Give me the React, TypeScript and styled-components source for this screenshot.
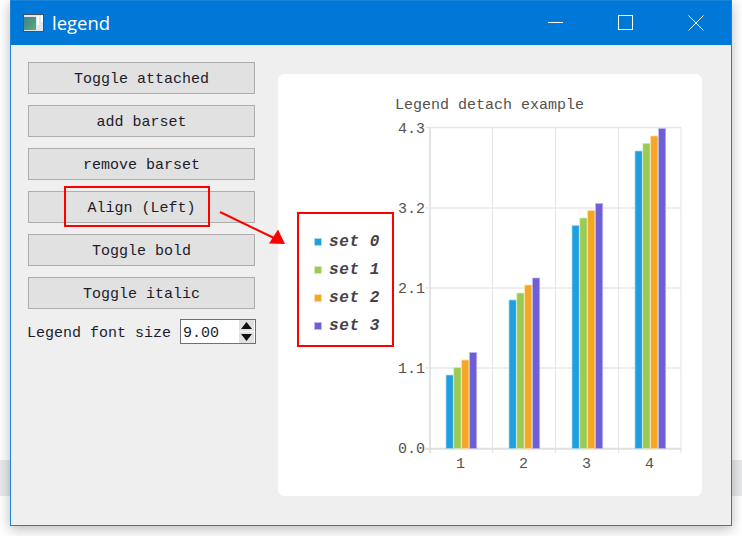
import React from "react";
import styled, { createGlobalStyle } from "styled-components";

const MONO = '"Liberation Mono", "DejaVu Sans Mono", monospace';

const SERIES = [
  { name: "set 0", fill: "#209fdf", edge: "#a6d9f2" },
  { name: "set 1", fill: "#99ca53", edge: "#d6eabb" },
  { name: "set 2", fill: "#f6a625", edge: "#fbdca8" },
  { name: "set 3", fill: "#6f5fd6", edge: "#c0b9ee" },
];

const BAR_TOPS = [
  [375, 367.5, 360, 352.5],
  [300, 293, 285, 278],
  [225.5, 218, 210.5, 203.5],
  [151, 143.5, 136, 128.5],
];

const GlobalStyle = createGlobalStyle`
  html, body {
    margin: 0;
    padding: 0;
    height: 536px;
    overflow: hidden;
    background: #ffffff;
  }
`;

const Page = styled.div`
  position: relative;
  width: 742px;
  height: 536px;
  padding-left: 10px;
  box-sizing: border-box;
  background: linear-gradient(
    to bottom,
    #ffffff 460px,
    #e8e9eb 460px,
    #e8e9eb 496px,
    #ffffff 496px
  );
`;

const Window = styled.div`
  width: 722px;
  height: 526px;
  box-sizing: border-box;
  border: 1px solid #1a83d9;
  background: #efefef;
  box-shadow: 0 3px 12px rgba(0, 0, 0, 0.28);
  display: flex;
  flex-direction: column;
`;

const TitleBar = styled.div`
  height: 44px;
  flex: none;
  background: #0078d7;
  display: flex;
  align-items: center;
  padding-left: 12px;
`;

const Title = styled.span`
  font-family: "Open Sans", "Noto Sans", sans-serif;
  font-size: 18.5px;
  color: #ffffff;
  margin-left: 8px;
  padding-bottom: 2px;
  flex: 1;
`;

const WindowButton = styled.div`
  width: 70px;
  height: 44px;
  display: flex;
  align-items: center;
  justify-content: center;
`;

const Body = styled.div`
  flex: 1;
  display: flex;
  padding: 17px 0 29px 17px;
  min-height: 0;
`;

const Controls = styled.div`
  width: 227px;
  display: flex;
  flex-direction: column;
  gap: 11px;
`;

const Button = styled.button`
  height: 32px;
  padding: 2px 0 0;
  border: 1px solid #adadad;
  background: #e1e1e1;
  font-family: ${MONO};
  font-size: 15px;
  color: #1c1c2c;
`;

const FontSizeRow = styled.div`
  display: flex;
  align-items: center;
  gap: 9px;
  margin: -1px -1px 0 -1px;
  font-family: ${MONO};
  font-size: 15px;
  color: #1c1c2c;
`;

const RowLabel = styled.span`
  padding-top: 4px;
`;

const SpinBox = styled.div`
  width: 76px;
  height: 25px;
  box-sizing: border-box;
  border: 1px solid #707070;
  background: #ffffff;
  display: flex;
  align-items: center;
  justify-content: space-between;
  padding: 0 1px 0 2px;
`;

const SpinButtons = styled.div`
  width: 15px;
  display: flex;
  flex-direction: column;
  gap: 1px;
`;

const SpinButton = styled.div`
  height: 11px;
  background: #e1e1e1;
  display: flex;
  align-items: center;
  justify-content: center;
`;

const ChartCard = styled.div`
  width: 424px;
  margin-left: 23px;
  margin-top: 12px;
  background: #ffffff;
  border-radius: 6px;
  display: flex;
  align-items: center;
  justify-content: space-between;
`;

const Legend = styled.ul`
  list-style: none;
  margin: 0 0 2px 36px;
  padding: 0;
  display: flex;
  flex-direction: column;
  gap: 8px;
`;

const LegendItem = styled.li`
  height: 20px;
  display: flex;
  align-items: center;
  gap: 7px;
  font-family: ${MONO};
  font-size: 16px;
  font-weight: bold;
  font-style: italic;
  letter-spacing: 0.6px;
  white-space: pre;
  color: #45424a;
`;

const Chip = styled.span<{ $fill: string; $edge: string }>`
  width: 8px;
  height: 8px;
  box-sizing: border-box;
  background: ${(p) => p.$fill};
  border: 1px solid ${(p) => p.$edge};
`;

const PlotSvg = styled.svg`
  display: block;
  flex: none;
`;

const AxisText = styled.text`
  font-family: ${MONO};
  font-size: 15px;
  fill: #55514f;
`;

// red callouts drawn over the screenshot
const Callout = styled.div<{ $x: number; $y: number; $w: number; $h: number }>`
  position: absolute;
  left: ${(p) => p.$x}px;
  top: ${(p) => p.$y}px;
  width: ${(p) => p.$w}px;
  height: ${(p) => p.$h}px;
  box-sizing: border-box;
  border: 2px solid #ff0000;
`;

const CalloutArrow = styled.svg`
  position: absolute;
  left: 215px;
  top: 205px;
`;

const AppIcon = () => (
  <svg width="21" height="18" viewBox="0 0 21 18">
    <defs>
      <linearGradient id="appIconFill" x1="0" y1="0" x2="1" y2="1">
        <stop offset="0" stopColor="#3f7f97" />
        <stop offset="1" stopColor="#5cae6c" />
      </linearGradient>
    </defs>
    <rect x="0.5" y="0.5" width="20" height="17" fill="#dfe7ec" stroke="#44525f" />
    <rect x="1" y="3" width="12" height="13" fill="url(#appIconFill)" />
    <rect x="14" y="2" width="2" height="9" fill="#ffffff" />
    <rect x="18" y="1" width="2" height="7" fill="#ffffff" />
  </svg>
);

const Plot = () => {
  const xGrid = [430, 492.5, 555.5, 618.5, 681];
  const yGrid = [127.5, 208, 288, 368];
  const yLabels = ["4.3", "3.2", "2.1", "1.1"];
  return (
    <PlotSvg width="317" height="422" viewBox="385 74 317 422">
      <AxisText x="395" y="109">Legend detach example</AxisText>
      {yGrid.map((y, i) => (
        <g key={y}>
          <line x1="425" x2="681" y1={y} y2={y} stroke="#e8e8e8" strokeWidth="1.5" />
          <AxisText x="398" y={y + 5}>{yLabels[i]}</AxisText>
        </g>
      ))}
      <AxisText x="398" y="453">0.0</AxisText>
      {xGrid.map((x, i) => (
        <line
          key={x}
          x1={x}
          x2={x}
          y1="127"
          y2="453"
          stroke="#e4e4e4"
          strokeWidth={i === 0 ? 2 : 1}
        />
      ))}
      <line x1="425" x2="681" y1="448.7" y2="448.7" stroke="#dfdfdf" strokeWidth="2" />
      {BAR_TOPS.map((tops, group) =>
        tops.map((top, s) => {
          const x = 446 + group * 63 + s * 7.85;
          return (
            <rect
              key={`${group}-${s}`}
              x={x}
              y={top}
              width="7.2"
              height={448.5 - top}
              fill={SERIES[s].fill}
              stroke={SERIES[s].edge}
              strokeWidth="0.7"
            />
          );
        }),
      )}
      {[1, 2, 3, 4].map((n) => (
        <AxisText key={n} x={460.5 + (n - 1) * 63} y="468" textAnchor="middle">
          {n}
        </AxisText>
      ))}
    </PlotSvg>
  );
};

const App: React.FC = () => {
  return (
    <Page>
      <GlobalStyle />
      <Window>
        <TitleBar>
          <AppIcon />
          <Title>legend</Title>
          <WindowButton>
            <svg width="16" height="16" viewBox="0 0 16 16">
              <line x1="0" x2="15" y1="7.5" y2="7.5" stroke="#fff" />
            </svg>
          </WindowButton>
          <WindowButton>
            <svg width="16" height="16" viewBox="0 0 16 16">
              <rect x="0.5" y="0.5" width="14" height="14" fill="none" stroke="#fff" />
            </svg>
          </WindowButton>
          <WindowButton>
            <svg width="16" height="16" viewBox="0 0 16 16">
              <path d="M0.5 0.5 L15.5 15.5 M15.5 0.5 L0.5 15.5" stroke="#fff" fill="none" />
            </svg>
          </WindowButton>
        </TitleBar>
        <Body>
          <Controls>
            <Button>Toggle attached</Button>
            <Button>add barset</Button>
            <Button>remove barset</Button>
            <Button>Align (Left)</Button>
            <Button>Toggle bold</Button>
            <Button>Toggle italic</Button>
            <FontSizeRow>
              <RowLabel>Legend font size</RowLabel>
              <SpinBox>
                <RowLabel>9.00</RowLabel>
                <SpinButtons>
                  <SpinButton>
                    <svg width="11" height="7" viewBox="0 0 11 7">
                      <path d="M5.5 0 L11 7 L0 7 Z" fill="#111" />
                    </svg>
                  </SpinButton>
                  <SpinButton>
                    <svg width="11" height="7" viewBox="0 0 11 7">
                      <path d="M0 0 L11 0 L5.5 7 Z" fill="#111" />
                    </svg>
                  </SpinButton>
                </SpinButtons>
              </SpinBox>
            </FontSizeRow>
          </Controls>
          <ChartCard>
            <Legend>
              {SERIES.map((s) => (
                <LegendItem key={s.name}>
                  <Chip $fill={s.fill} $edge={s.edge} />
                  {s.name}
                </LegendItem>
              ))}
            </Legend>
            <Plot />
          </ChartCard>
        </Body>
      </Window>
      <Callout $x={64} $y={186} $w={146} $h={41} />
      <Callout $x={297} $y={212} $w={97} $h={135} />
      <CalloutArrow width="75" height="45" viewBox="215 205 75 45">
        <line x1="220" y1="212" x2="274" y2="238" stroke="#ff0000" strokeWidth="2" />
        <path d="M285 244 L269 243.5 L278 229.5 Z" fill="#ff0000" />
      </CalloutArrow>
    </Page>
  );
};

export default App;
